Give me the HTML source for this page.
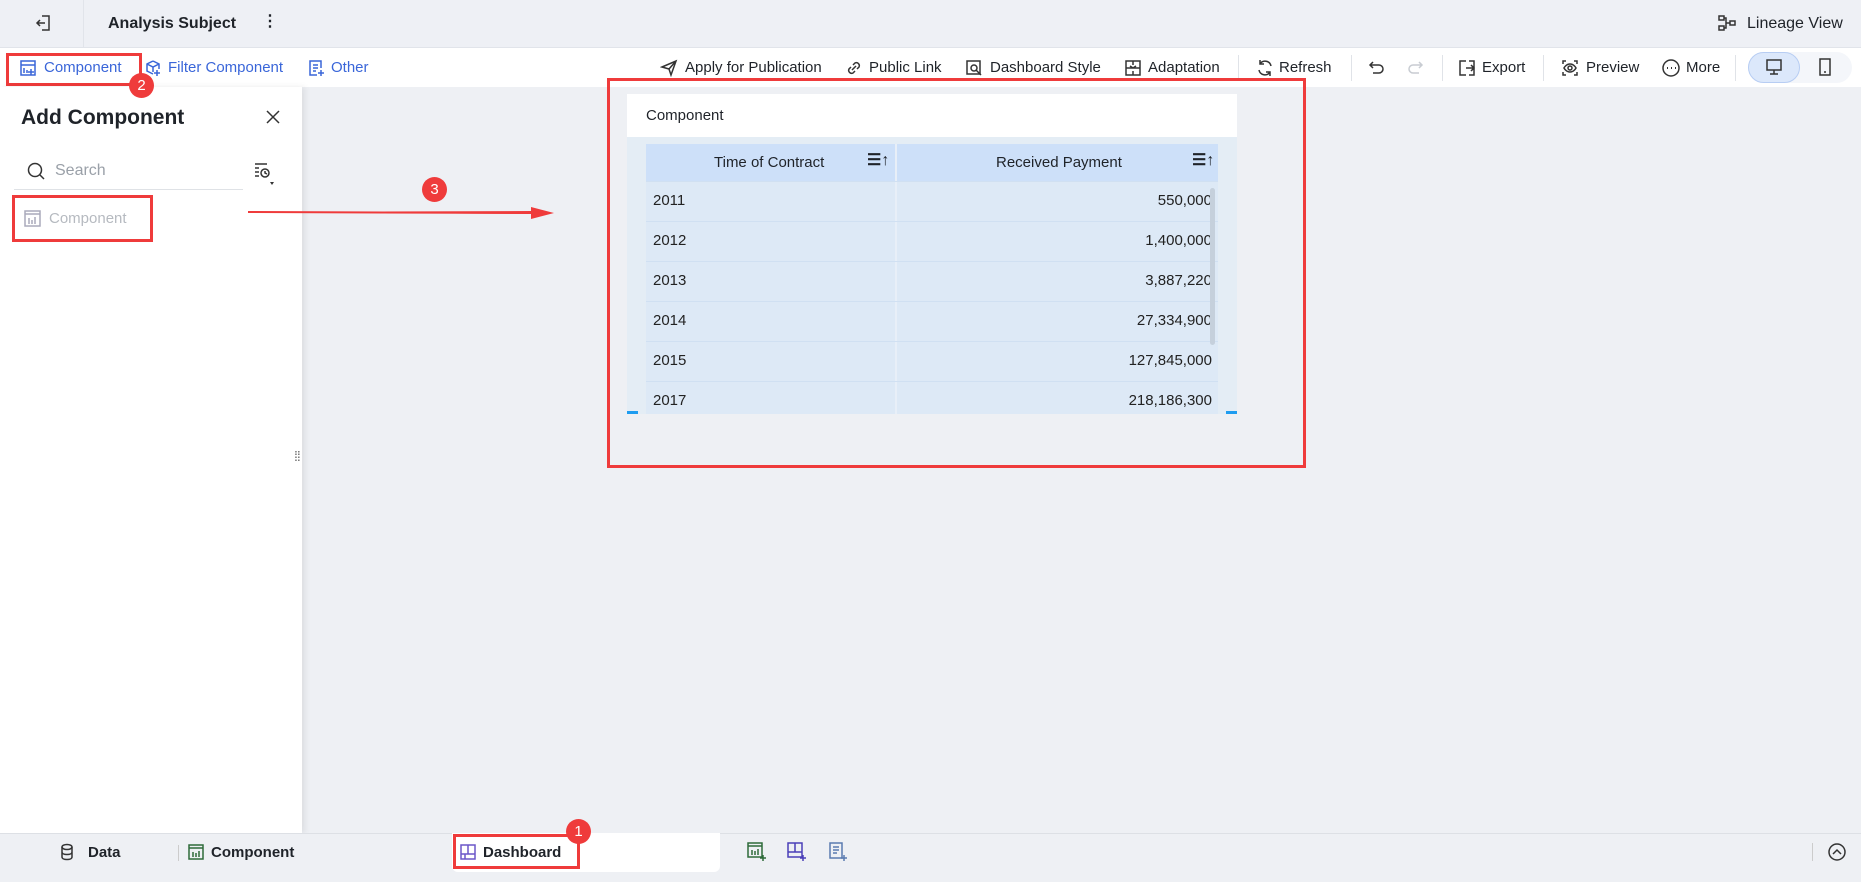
<!DOCTYPE html>
<html><head><meta charset="utf-8"><style>
*{box-sizing:border-box;margin:0;padding:0}
body{width:1861px;height:882px;overflow:hidden;background:#eef0f4;font-family:"Liberation Sans",sans-serif;color:#1f2329;position:relative;font-size:16px}
.a{position:absolute}
svg{position:absolute;fill:none;stroke:#333;stroke-width:1.5}
.t{position:absolute;white-space:nowrap;line-height:20px}
.tb{font-size:15px}
.badge{position:absolute;width:25px;height:25px;border-radius:50%;background:#ef3b3b;color:#fff;font-size:15px;text-align:center;line-height:25px;z-index:10}
.red{position:absolute;border:3px solid #ef3b3b}
.div{position:absolute;width:1px;height:26px;background:#e0e3e8;top:55px}
.row{position:absolute;left:646px;width:572px;height:40px;border-top:1px solid #d0e0f2}
.row span{position:absolute;top:10px;font-size:15px;color:#222}
</style></head><body>
<div class="a" style="left:0;top:0;width:1861px;height:48px;background:#eef0f5;border-bottom:1px solid #e1e4ea"></div>
<div class="a" style="left:83px;top:0;width:1px;height:48px;background:#e1e4ea"></div>
<svg style="left:34px;top:13px" width="20" height="20" viewBox="0 0 20 20"><path d="M8 3h7v14H8M11 10H3M6 7l-3 3 3 3"/></svg>
<div class="t" style="left:108px;top:14px;font-weight:bold;font-size:16px">Analysis Subject</div>
<div class="t" style="left:262px;top:12px;font-weight:bold">⋮</div>
<svg style="left:1717px;top:14px" width="20" height="18" viewBox="0 0 20 18"><rect x="2" y="2" width="5" height="4"/><rect x="2" y="12" width="5" height="4"/><rect x="13" y="7" width="5" height="4"/><path d="M7 4h2v10H7M9 9h4"/></svg>
<div class="t" style="left:1747px;top:14px;font-size:16px">Lineage View</div>
<div class="a" style="left:0;top:48px;width:1861px;height:39px;background:#fff"></div>
<svg style="left:19px;top:59px;stroke:#3a66d9" width="18" height="18" viewBox="0 0 18 18"><rect x="2" y="2" width="14" height="14"/><path d="M2 6h14M5 9v5M8 11v3M12 10v6M9 13h6"/></svg>
<div class="t tb" style="left:44px;top:58px;color:#3a66d9">Component</div>
<svg style="left:144px;top:59px;stroke:#3a66d9" width="18" height="18" viewBox="0 0 18 18"><path d="M9 2l6 3v5M9 2L3 5v7l6 3M3 5l6 3 6-3M9 8v5M13 11v6M10 14h6"/></svg>
<div class="t tb" style="left:168px;top:58px;color:#3a66d9">Filter Component</div>
<svg style="left:307px;top:59px;stroke:#3a66d9" width="18" height="18" viewBox="0 0 18 18"><path d="M14 9V2H3v14h7M6 6h5M6 9h5M6 12h3M14 11v6M11 14h6"/></svg>
<div class="t tb" style="left:331px;top:58px;color:#3a66d9">Other</div>
<div class="red" style="left:6px;top:53px;width:136px;height:33px"></div>
<div class="badge" style="left:129px;top:73px">2</div>

<svg style="left:660px;top:59px" width="18" height="18" viewBox="0 0 18 18"><path d="M2 8l14-6-5 14-2-6zM9 10l7-8"/></svg>
<div class="t tb" style="left:685px;top:58px">Apply for Publication</div>
<svg style="left:845px;top:59px" width="18" height="18" viewBox="0 0 18 18"><path d="M8 6l2-2a3 3 0 014 4l-2 2M10 12l-2 2a3 3 0 01-4-4l2-2M7 11l4-4"/></svg>
<div class="t tb" style="left:869px;top:58px">Public Link</div>
<svg style="left:965px;top:59px" width="18" height="18" viewBox="0 0 18 18"><rect x="2" y="2" width="13" height="13"/><circle cx="9" cy="9" r="3"/><path d="M11 11l5 5"/></svg>
<div class="t tb" style="left:990px;top:58px">Dashboard Style</div>
<svg style="left:1124px;top:59px" width="18" height="18" viewBox="0 0 18 18"><rect x="2" y="2" width="14" height="14"/><path d="M2 9h14M9 2v4M9 12v4M6 7l3 2 3-2"/></svg>
<div class="t tb" style="left:1148px;top:58px">Adaptation</div>
<div class="div" style="left:1238px"></div>
<svg style="left:1255px;top:58px" width="20" height="20" viewBox="0 0 20 20"><path d="M16 8a6 6 0 00-11-2M4 12a6 6 0 0011 2M5 2v4h4M15 18v-4h-4"/></svg>
<div class="t tb" style="left:1279px;top:58px">Refresh</div>
<div class="div" style="left:1351px"></div>
<svg style="left:1367px;top:58px" width="20" height="20" viewBox="0 0 20 20"><path d="M6 4L3 7l3 3M3 7h9a4 4 0 010 8H6"/></svg>
<svg style="left:1405px;top:58px;stroke:#c8ccd2" width="20" height="20" viewBox="0 0 20 20"><path d="M14 4l3 3-3 3M17 7H8a4 4 0 000 8h6"/></svg>
<div class="div" style="left:1442px"></div>
<svg style="left:1458px;top:59px" width="18" height="18" viewBox="0 0 18 18"><path d="M8 2H2v14h6M11 2h5v14h-5M8 9h8M13 6l3 3-3 3"/></svg>
<div class="t tb" style="left:1482px;top:58px">Export</div>
<div class="div" style="left:1543px"></div>
<svg style="left:1561px;top:59px" width="18" height="18" viewBox="0 0 18 18"><path d="M2 5V2h3M13 2h3v3M16 13v3h-3M5 16H2v-3M3 9s2-4 6-4 6 4 6 4-2 4-6 4-6-4-6-4z"/><circle cx="9" cy="9" r="2"/></svg>
<div class="t tb" style="left:1586px;top:58px">Preview</div>
<svg style="left:1661px;top:58px" width="20" height="20" viewBox="0 0 20 20"><circle cx="10" cy="10" r="8"/><path d="M6 10h1M10 10h1M14 10h1" stroke-width="2"/></svg>
<div class="t tb" style="left:1686px;top:58px">More</div>
<div class="div" style="left:1735px"></div>
<div class="a" style="left:1748px;top:52px;width:104px;height:31px;border-radius:16px;background:#f4f6fa"></div>
<div class="a" style="left:1748px;top:52px;width:52px;height:31px;border-radius:16px;background:#dce8fb;border:1px solid #b7cdf3"></div>
<svg style="left:1765px;top:58px" width="18" height="18" viewBox="0 0 18 18"><rect x="2" y="2" width="14" height="10"/><path d="M9 12v4M5 16h8"/></svg>
<svg style="left:1816px;top:58px" width="18" height="18" viewBox="0 0 18 18"><rect x="4" y="1" width="10" height="16"/><path d="M8 14h2"/></svg>

<div class="a" style="left:0;top:87px;width:302px;height:746px;background:#fff;box-shadow:3px 0 6px rgba(0,0,0,.08)"></div>
<div class="t" style="left:21px;top:106px;font-weight:bold;font-size:21px;line-height:24px">Add Component</div>
<svg style="left:264px;top:108px" width="18" height="18" viewBox="0 0 18 18"><path d="M3 3l12 12M15 3L3 15"/></svg>
<svg style="left:26px;top:161px" width="20" height="20" viewBox="0 0 20 20"><circle cx="9" cy="9" r="6.5"/><path d="M14 14l4 4"/></svg>
<div class="t" style="left:55px;top:161px;color:#9aa0a8">Search</div>
<div class="a" style="left:14px;top:189px;width:229px;height:1px;background:#dfe2e6"></div>
<svg style="left:253px;top:162px" width="22" height="26" viewBox="0 0 22 26"><path d="M2 2h12M2 6h4M2 10h4M2 14h4"/><circle cx="12" cy="11" r="4"/><path d="M12 9v2l2 1"/><path d="M17 20h4l-2 3z" fill="#333" stroke="none"/></svg>
<div class="red" style="left:12px;top:195px;width:141px;height:47px"></div>
<svg style="left:24px;top:210px;stroke:#aab" width="17" height="17" viewBox="0 0 17 17"><rect x="1" y="1" width="15" height="15"/><path d="M1 4h15M5 8v6M8 10v4M11 7v7"/></svg>
<div class="t tb" style="left:49px;top:209px;color:#b6bac0">Component</div>
<div class="t" style="left:294px;top:446px;font-size:14px;color:#666;letter-spacing:-1px">⁞⁞</div>
<svg style="left:246px;top:200px;stroke:none" width="310" height="24" viewBox="0 0 310 24"><path d="M2 12 L285 14 L285 19 L308 13 L285 7 L285 11 Z" fill="#ef3b3b"/><path d="M2 12L285 13" stroke="#ef3b3b" stroke-width="2"/></svg>
<div class="badge" style="left:422px;top:177px">3</div>

<div class="red" style="left:607px;top:78px;width:699px;height:390px"></div>
<div class="a" style="left:627px;top:94px;width:610px;height:43px;background:#fff"></div>
<div class="t" style="left:646px;top:106px;font-size:15px">Component</div>
<div class="a" style="left:627px;top:137px;width:610px;height:277px;background:#e4edf5"></div>
<div class="a" style="left:646px;top:144px;width:572px;height:270px;background:#dde9f6"></div>
<div class="a" style="left:646px;top:144px;width:572px;height:37px;background:#cde0f9"></div>
<div class="a" style="left:895px;top:144px;width:2px;height:270px;background:#e8eff8"></div>
<div class="t" style="left:714px;top:153px;font-size:15px">Time of Contract</div>
<div class="t" style="left:867px;top:151px;font-weight:bold">☰↑</div>
<div class="t" style="left:996px;top:153px;font-size:15px">Received Payment</div>
<div class="t" style="left:1192px;top:151px;font-weight:bold">☰↑</div>
<div class="row" style="top:181px"><span style="left:7px">2011</span><span style="right:6px">550,000</span></div>
<div class="row" style="top:221px"><span style="left:7px">2012</span><span style="right:6px">1,400,000</span></div>
<div class="row" style="top:261px"><span style="left:7px">2013</span><span style="right:6px">3,887,220</span></div>
<div class="row" style="top:301px"><span style="left:7px">2014</span><span style="right:6px">27,334,900</span></div>
<div class="row" style="top:341px"><span style="left:7px">2015</span><span style="right:6px">127,845,000</span></div>
<div class="row" style="top:381px;height:33px;overflow:hidden"><span style="left:7px">2017</span><span style="right:6px">218,186,300</span></div>
<div class="a" style="left:1210px;top:188px;width:5px;height:157px;background:#c5d0dc;border-radius:3px"></div>
<div class="a" style="left:627px;top:411px;width:11px;height:3px;background:#1e9cf0"></div>
<div class="a" style="left:1226px;top:411px;width:11px;height:3px;background:#1e9cf0"></div>

<div class="a" style="left:0;top:833px;width:1861px;height:49px;background:#eef0f4;border-top:1px solid #dde0e5"></div>
<svg style="left:59px;top:843px" width="16" height="18" viewBox="0 0 16 18"><ellipse cx="8" cy="4" rx="5" ry="2.5"/><path d="M3 4v10c0 1.5 2 2.5 5 2.5s5-1 5-2.5V4M3 9c0 1.5 2 2.5 5 2.5s5-1 5-2.5"/></svg>
<div class="t" style="left:88px;top:843px;font-weight:bold;font-size:15px">Data</div>
<div class="a" style="left:178px;top:845px;width:1px;height:16px;background:#ccc"></div>
<svg style="left:188px;top:844px;stroke:#2e6b3a" width="16" height="16" viewBox="0 0 16 16"><rect x="1" y="1" width="14" height="14"/><path d="M1 4h14M5 8v5M8 9v4M11 7v6"/></svg>
<div class="t" style="left:211px;top:843px;font-weight:bold;font-size:15px">Component</div>
<div class="a" style="left:452px;top:833px;width:268px;height:39px;background:#fff;border-radius:0 0 6px 6px"></div>
<svg style="left:460px;top:844px;stroke:#6b57c9" width="16" height="16" viewBox="0 0 16 16"><rect x="1" y="1" width="14" height="14"/><path d="M8 1v9M1 10h14M5 10v5"/></svg>
<div class="t" style="left:483px;top:843px;font-weight:bold;font-size:15px">Dashboard</div>
<div class="red" style="left:453px;top:834px;width:127px;height:35px"></div>
<div class="badge" style="left:566px;top:819px">1</div>
<svg style="left:747px;top:842px;stroke:#2e6b3a" width="20" height="20" viewBox="0 0 20 20"><rect x="1" y="1" width="14" height="14"/><path d="M1 4h14M5 8v5M8 9v4M11 7v6M16 13v6M13 16h6"/></svg>
<svg style="left:787px;top:842px;stroke:#4a3fb8" width="20" height="20" viewBox="0 0 20 20"><rect x="1" y="1" width="14" height="14"/><path d="M8 1v9M1 10h14M16 13v6M13 16h6"/></svg>
<svg style="left:828px;top:842px;stroke:#5a7bb0" width="20" height="20" viewBox="0 0 20 20"><rect x="2" y="1" width="12" height="15"/><path d="M5 5h6M5 8h6M5 11h4M16 13v6M13 16h6"/></svg>
<div class="a" style="left:1812px;top:843px;width:1px;height:18px;background:#ccc"></div>
<svg style="left:1827px;top:842px" width="20" height="20" viewBox="0 0 20 20"><circle cx="10" cy="10" r="8"/><path d="M6 12l4-4 4 4"/></svg>
</body></html>
